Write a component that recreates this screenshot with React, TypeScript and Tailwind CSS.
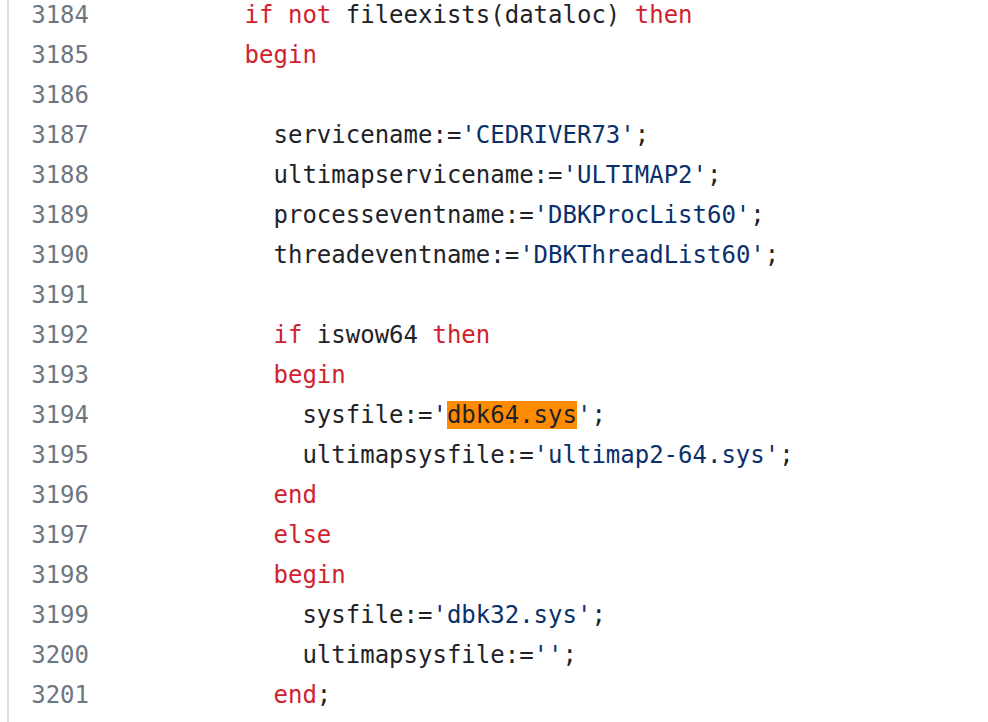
type Tok = { t: string; k?: 'kw' | 'str' | 'hl' };

const LINES: { n: number; toks: Tok[] }[] = [
  { n: 3184, toks: [{ t: '        ' }, { t: 'if', k: 'kw' }, { t: ' ' }, { t: 'not', k: 'kw' }, { t: ' fileexists(dataloc) ' }, { t: 'then', k: 'kw' }] },
  { n: 3185, toks: [{ t: '        ' }, { t: 'begin', k: 'kw' }] },
  { n: 3186, toks: [] },
  { n: 3187, toks: [{ t: '          servicename:=' }, { t: "'CEDRIVER73'", k: 'str' }, { t: ';' }] },
  { n: 3188, toks: [{ t: '          ultimapservicename:=' }, { t: "'ULTIMAP2'", k: 'str' }, { t: ';' }] },
  { n: 3189, toks: [{ t: '          processeventname:=' }, { t: "'DBKProcList60'", k: 'str' }, { t: ';' }] },
  { n: 3190, toks: [{ t: '          threadeventname:=' }, { t: "'DBKThreadList60'", k: 'str' }, { t: ';' }] },
  { n: 3191, toks: [] },
  { n: 3192, toks: [{ t: '          ' }, { t: 'if', k: 'kw' }, { t: ' iswow64 ' }, { t: 'then', k: 'kw' }] },
  { n: 3193, toks: [{ t: '          ' }, { t: 'begin', k: 'kw' }] },
  { n: 3194, toks: [{ t: '            sysfile:=' }, { t: "'", k: 'str' }, { t: 'dbk64.sys', k: 'hl' }, { t: "'", k: 'str' }, { t: ';' }] },
  { n: 3195, toks: [{ t: '            ultimapsysfile:=' }, { t: "'ultimap2-64.sys'", k: 'str' }, { t: ';' }] },
  { n: 3196, toks: [{ t: '          ' }, { t: 'end', k: 'kw' }] },
  { n: 3197, toks: [{ t: '          ' }, { t: 'else', k: 'kw' }] },
  { n: 3198, toks: [{ t: '          ' }, { t: 'begin', k: 'kw' }] },
  { n: 3199, toks: [{ t: '            sysfile:=' }, { t: "'dbk32.sys'", k: 'str' }, { t: ';' }] },
  { n: 3200, toks: [{ t: '            ultimapsysfile:=' }, { t: "''", k: 'str' }, { t: ';' }] },
  { n: 3201, toks: [{ t: '          ' }, { t: 'end', k: 'kw' }, { t: ';' }] },
];

function Token({ tok }: { tok: Tok }) {
  if (tok.k === 'kw') return <span className="text-[#cf222e]">{tok.t}</span>;
  if (tok.k === 'str') return <span className="text-[#0a3069]">{tok.t}</span>;
  if (tok.k === 'hl') return <span className="bg-[#ff8c00] text-[#1f2328]">{tok.t}</span>;
  return <span>{tok.t}</span>;
}

export default function App() {
  return (
    <div className="w-[988px] h-[722px] overflow-hidden bg-white pl-[7px]">
      <div className="-mt-[5px] border-l-2 border-[#d8dee4] font-['DejaVu_Sans_Mono',monospace] text-[24px] text-[#1f2328]">
        {LINES.map((line) => (
          <div key={line.n} className="flex h-[40px] items-center leading-[40px]">
            <div className="w-[80px] shrink-0 text-right text-[#6e7781]">{line.n}</div>
            <div className="whitespace-pre pl-[40px]">
              {line.toks.map((tok, i) => (
                <Token key={i} tok={tok} />
              ))}
            </div>
          </div>
        ))}
        <div className="h-[40px]" />
      </div>
    </div>
  );
}
